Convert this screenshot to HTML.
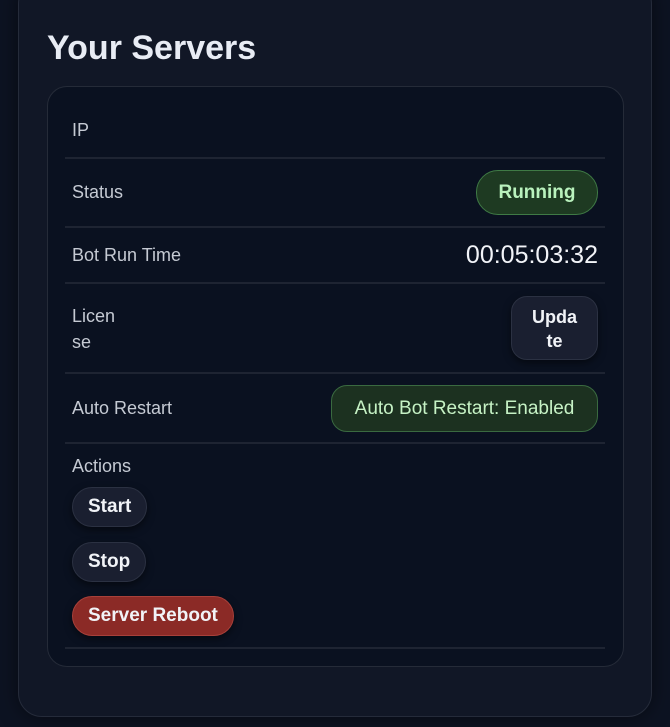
<!DOCTYPE html>
<html><head><style>
html,body{margin:0;padding:0;width:670px;height:727px;overflow:hidden;background:#0d1322;font-family:"Liberation Sans",sans-serif;}
.outer{position:absolute;left:18px;top:-20px;width:632px;height:735px;border:1px solid #252b3a;border-radius:24px;background:#111726;box-shadow:0 0 20px rgba(0,0,0,.5);}
h1{position:absolute;left:47px;top:29px;margin:0;font-size:34px;font-weight:bold;color:#e8ecf4;letter-spacing:0px;}
.inner{position:absolute;left:47px;top:86px;width:575px;height:579px;border:1px solid #252b38;border-radius:20px;background:#0a1120;}
.sep{position:absolute;left:65px;width:540px;height:2px;background:#1e2432;}
.lbl{position:absolute;left:72px;color:#c5cad3;font-size:18px;}
.pill{position:absolute;border-radius:22px;font-weight:bold;font-size:19px;text-align:center;box-sizing:border-box;}
.btn{position:absolute;left:72px;height:40px;line-height:38px;border-radius:20px;background:#1a1f30;border:1px solid #2b3142;color:#f1f3f7;font-weight:bold;font-size:19px;box-sizing:border-box;padding:0 15px;box-shadow:0 3px 8px rgba(0,0,0,.5);}
</style></head><body>
<div class="outer"></div>
<h1>Your Servers</h1>
<div class="inner"></div>
<div class="lbl" style="top:120px">IP</div>
<div class="sep" style="top:157px"></div>
<div class="lbl" style="top:182px">Status</div>
<div class="pill" style="left:476px;top:170px;width:122px;height:45px;line-height:43px;background:#1e3a22;border:1px solid #3f7a45;color:#b9f2bd;">Running</div>
<div class="sep" style="top:226px"></div>
<div class="lbl" style="top:245px">Bot Run Time</div>
<div style="position:absolute;right:72px;top:241px;color:#f2f4f8;font-size:25px;">00:05:03:32</div>
<div class="sep" style="top:282px"></div>
<div class="lbl" style="top:303px;line-height:26px">Licen<br>se</div>
<div class="pill" style="left:511px;top:296px;width:87px;height:64px;line-height:24px;padding-top:8px;background:#1a1f30;border:1px solid #2b3142;color:#f1f3f7;font-size:18px;border-radius:16px;box-shadow:0 3px 8px rgba(0,0,0,.5);">Upda<br>te</div>
<div class="sep" style="top:372px"></div>
<div class="lbl" style="top:398px">Auto Restart</div>
<div class="pill" style="left:331px;top:385px;width:267px;height:47px;line-height:45px;background:#1c3120;border:1px solid #3a6a40;color:#c6f2c5;font-weight:normal;font-size:19px;border-radius:16px;">Auto Bot Restart: Enabled</div>
<div class="sep" style="top:442px"></div>
<div class="lbl" style="top:456px">Actions</div>
<div class="btn" style="top:487px">Start</div>
<div class="btn" style="top:542px">Stop</div>
<div class="btn" style="top:596px;background:#8b2a26;border-color:#a8403a;">Server Reboot</div>
<div class="sep" style="top:647px"></div>
</body></html>
